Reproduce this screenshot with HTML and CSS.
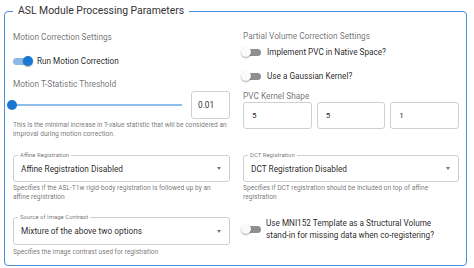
FILE: index.html
```html
<!DOCTYPE html>
<html lang="en">
<head>
    <meta charset="UTF-8" />
    <meta name="viewport" content="width=device-width, initial-scale=1.0" />
    <title>ASL Module Processing Parameters</title>
    <link rel="stylesheet" href="styles.css">
</head>
<body>
    <fieldset class="panel">
        <legend class="panel-title">ASL Module Processing Parameters</legend>

        <div class="grid">
            <!-- 左上：モーション補正 -->
            <div class="cell motion">
                <div class="section-label">Motion Correction Settings</div>
                <div class="switch-row first">
                    <span class="switch on"><span class="track"></span><span class="thumb"></span></span>
                    <span class="switch-text">Run Motion Correction</span>
                </div>
                <div class="section-label threshold-label">Motion T-Statistic Threshold</div>
                <div class="slider-row">
                    <div class="slider"><span class="slider-thumb"></span></div>
                    <div class="text-box threshold-box">0.01</div>
                </div>
                <p class="helper">This is the minimal increase in T-value statistic that will be considered an<br>improval during motion correction.</p>
            </div>

            <!-- 右上：PVC -->
            <div class="cell pvc">
                <div class="section-label pvc-label">Partial Volume Correction Settings</div>
                <div class="switch-row pvc-native">
                    <span class="switch"><span class="track"></span><span class="thumb"></span></span>
                    <span class="switch-text">Implement PVC in Native Space?</span>
                </div>
                <div class="switch-row pvc-gauss">
                    <span class="switch"><span class="track"></span><span class="thumb"></span></span>
                    <span class="switch-text">Use a Gaussian Kernel?</span>
                </div>
                <div class="section-label kernel-label">PVC Kernel Shape</div>
                <div class="kernel-row">
                    <div class="text-box kernel-box">5</div>
                    <div class="text-box kernel-box">5</div>
                    <div class="text-box kernel-box">1</div>
                </div>
            </div>

            <div class="cell select-cell row2">
                <div class="select">
                    <span class="float-label">Affine Registration</span>
                    <span class="select-value">Affine Registration Disabled</span>
                    <span class="arrow"></span>
                </div>
                <p class="helper">Specifies if the ASL-T1w rigid-body registration is followed up by an<br>affine registration</p>
            </div>

            <div class="cell select-cell row2">
                <div class="select">
                    <span class="float-label">DCT Registration</span>
                    <span class="select-value">DCT Registration Disabled</span>
                    <span class="arrow"></span>
                </div>
                <p class="helper">Specifies if DCT registration should be included on top of affine<br>registration</p>
            </div>

            <div class="cell select-cell row3">
                <div class="select">
                    <span class="float-label">Source of Image Contrast</span>
                    <span class="select-value">Mixture of the above two options</span>
                    <span class="arrow"></span>
                </div>
                <p class="helper single">Specifies the image contrast used for registration</p>
            </div>

            <div class="cell row3">
                <div class="switch-row mni">
                    <span class="switch"><span class="track"></span><span class="thumb"></span></span>
                    <span class="switch-text">Use MNI152 Template as a Structural Volume<br>stand-in for missing data when co-registering?</span>
                </div>
            </div>
        </div>
    </fieldset>
</body>
</html>
```

FILE: styles.css
```css
html, body {
    margin: 0;
    padding: 0;
    width: 100%;
    height: 100%;
    background: #fff;
}

body {
    font-family: Roboto, "Liberation Sans", sans-serif;
    color: rgba(0, 0, 0, 0.87);
}

.panel {
    margin: 4px 7px 0 4px;
    padding: 0 7px 8px 8px;
    border: 1px solid #4b8fdb;
    border-radius: 4px;
    min-width: 0;
}

.panel-title {
    padding: 0 5px;
    font-size: 10.4px;
    line-height: 14px;
    color: #333;
}

.grid {
    display: grid;
    grid-template-columns: 217px 216px;
    column-gap: 13px;
    align-items: start;
}

.section-label {
    font-size: 8.3px;
    line-height: 10px;
    color: rgba(0, 0, 0, 0.58);
}

.motion .section-label:first-child {
    margin-top: 14px;
}

.threshold-label {
    margin-top: 11px;
}

/* スイッチ */
.switch-row {
    display: flex;
    align-items: center;
    min-height: 14px;
}

.switch-row.first {
    margin-top: 12px;
}

.switch {
    position: relative;
    flex: none;
    width: 22px;
    height: 14px;
    margin-left: -2px;
    margin-right: 4px;
    display: flex;
    align-items: center;
}

.track {
    display: block;
    width: 18px;
    height: 7px;
    margin-left: 2px;
    border-radius: 4px;
    background: #8f8f8f;
}

.thumb {
    position: absolute;
    top: 2px;
    left: 0;
    width: 10px;
    height: 10px;
    border-radius: 50%;
    background: #fafafa;
    box-shadow: 0 1px 1.5px rgba(0, 0, 0, 0.35);
}

.switch.on .track {
    background: #8bb9e8;
}

.switch.on .thumb {
    left: 12px;
    background: #1976d2;
}

.switch-text {
    font-size: 8.2px;
    line-height: 12px;
}

/* スライダー */
.slider-row {
    display: flex;
    align-items: center;
    margin-top: 2px;
}

.slider {
    position: relative;
    width: 170px;
    height: 2px;
    margin-left: -1px;
    background: #90bdec;
}

.slider-thumb {
    position: absolute;
    top: -4px;
    left: -5px;
    width: 10px;
    height: 10px;
    border-radius: 50%;
    background: #1976d2;
}

.text-box {
    box-sizing: border-box;
    border: 1px solid #d0d0d0;
    border-radius: 3px;
    font-size: 8.3px;
    display: flex;
    align-items: center;
}

.threshold-box {
    width: 39px;
    height: 28px;
    margin-left: 9px;
    padding-left: 6px;
}

.helper {
    margin: 2px 0 0 0;
    font-size: 6.65px;
    line-height: 9px;
    color: rgba(0, 0, 0, 0.58);
    white-space: nowrap;
}

/* PVC */
.pvc-label {
    margin-top: 13px;
}

.pvc-native {
    margin-top: 4px;
}

.pvc-gauss {
    margin-top: 10px;
}

.kernel-label {
    margin-top: 8px;
}

.kernel-row {
    display: flex;
    gap: 5px;
    margin-top: 1px;
}

.kernel-box {
    width: 69px;
    height: 27px;
    padding-left: 8px;
    font-size: 8px;
}

/* セレクト */
.row2 {
    margin-top: 16px;
}

.row3 {
    margin-top: 15px;
}

.select {
    position: relative;
    box-sizing: border-box;
    height: 27px;
    padding: 0 8px 0 7px;
    border: 1px solid #cfcfcf;
    border-radius: 3px;
    display: flex;
    align-items: center;
    justify-content: space-between;
}

.row3 .select {
    height: 28px;
}

.float-label {
    position: absolute;
    top: -5px;
    left: 4px;
    padding: 0 2px;
    background: #fff;
    font-size: 6px;
    line-height: 8px;
    color: rgba(0, 0, 0, 0.58);
}

.select-value {
    font-size: 8.3px;
}

.arrow {
    width: 0;
    height: 0;
    border-left: 2.5px solid transparent;
    border-right: 2.5px solid transparent;
    border-top: 3px solid #777;
}

.helper.single {
    margin-top: 3px;
}

.mni .switch-text {
    margin-left: -1px;
}
```
